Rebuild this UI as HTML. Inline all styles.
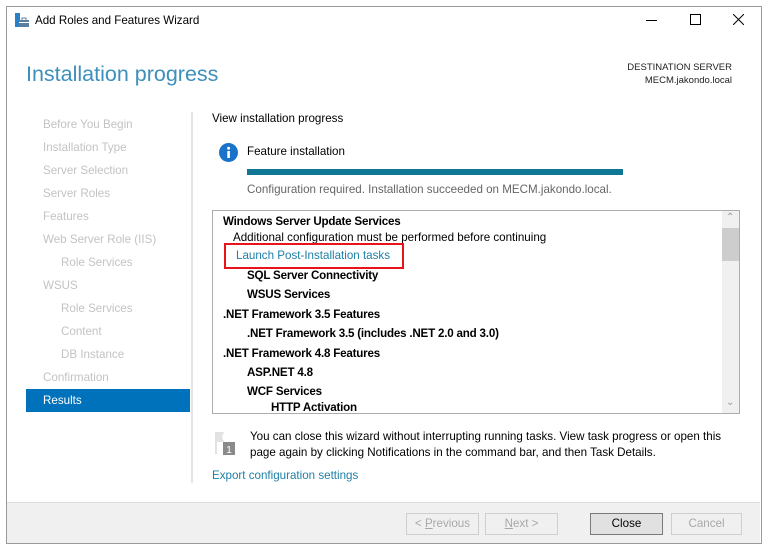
<!DOCTYPE html>
<html><head><meta charset="utf-8"><style>
body{margin:0;width:768px;height:551px;background:#fff;position:relative;overflow:hidden;font-family:"Liberation Sans",sans-serif;font-size:11.6px;color:#000}
.a{position:absolute;white-space:nowrap}
.nav{position:absolute;left:43px;color:#c3c3c3;font-size:11.6px}
.b{font-weight:bold;letter-spacing:-0.2px}
.btn{position:absolute;top:513px;height:20px;border:1px solid #cfcfcf;background:#f0f0f0;color:#a8a8a8;text-align:center;line-height:20px;font-size:11.6px;width:70px}
</style></head><body>
<div class="a" style="left:6px;top:6px;width:754px;height:536px;border:1px solid #9a9a9a;background:#fff"></div>
<svg class="a" style="left:14px;top:13px" width="16" height="16"><rect x="1" y="0" width="5" height="14" fill="#2b7fc7"/><rect x="5" y="7" width="10" height="7" fill="#5b7da0"/><rect x="8" y="5" width="4" height="3" fill="none" stroke="#5b7da0"/><rect x="5" y="9" width="10" height="1" fill="#fff"/></svg>
<div class="a" style="left:35px;top:14px;font-size:11.6px">Add Roles and Features Wizard</div>
<div class="a" style="left:646px;top:20px;width:11px;height:1px;background:#000"></div>
<div class="a" style="left:690px;top:14px;width:9px;height:9px;border:1px solid #000"></div>
<svg class="a" style="left:733px;top:14px" width="11" height="11"><path d="M0 0L11 11M11 0L0 11" stroke="#000" stroke-width="1"/></svg>
<div class="a" style="left:26px;top:62px;font-size:21.5px;color:#3d8fbc">Installation progress</div>
<div class="a" style="right:36px;top:61px;font-size:9.5px;text-align:right;color:#222;line-height:13px">DESTINATION SERVER<br>MECM.jakondo.local</div>
<div class="nav" style="top:118px">Before You Begin</div>
<div class="nav" style="top:141px">Installation Type</div>
<div class="nav" style="top:164px">Server Selection</div>
<div class="nav" style="top:187px">Server Roles</div>
<div class="nav" style="top:210px">Features</div>
<div class="nav" style="top:233px">Web Server Role (IIS)</div>
<div class="nav" style="top:256px;left:61px">Role Services</div>
<div class="nav" style="top:279px">WSUS</div>
<div class="nav" style="top:302px;left:61px">Role Services</div>
<div class="nav" style="top:325px;left:61px">Content</div>
<div class="nav" style="top:348px;left:61px">DB Instance</div>
<div class="nav" style="top:371px">Confirmation</div>
<div class="a" style="left:26px;top:389px;width:164px;height:23px;background:#0072bc"></div>
<div class="nav" style="top:394px;color:#fff">Results</div>
<div class="a" style="left:191px;top:112px;width:2px;height:371px;background:#e4e4e4"></div>
<div class="a" style="left:212px;top:112px">View installation progress</div>
<svg class="a" style="left:219px;top:143px" width="19" height="19"><circle cx="9.5" cy="9.5" r="9.5" fill="#1a73c8"/><rect x="8.3" y="8" width="2.6" height="7" fill="#fff"/><circle cx="9.6" cy="5.2" r="1.5" fill="#fff"/></svg>
<div class="a" style="left:247px;top:145px">Feature installation</div>
<div class="a" style="left:247px;top:169px;width:376px;height:6px;background:#0f7694"></div>
<div class="a" style="left:247px;top:183px;color:#666">Configuration required. Installation succeeded on MECM.jakondo.local.</div>
<div class="a" style="left:212px;top:210px;width:526px;height:202px;border:1px solid #adadad;background:#fff;overflow:hidden">
<div class="a" style="left:509px;top:0;width:17px;height:202px;background:#f0f0f0"></div>
<div class="a" style="left:509px;top:17px;width:17px;height:33px;background:#cdcdcd"></div>
<div class="a" style="left:513px;top:1px;color:#999;font-size:10px">&#8963;</div>
<div class="a" style="left:513px;top:186px;color:#999;font-size:10px">&#8964;</div>
<div class="a b" style="left:10px;top:4px">Windows Server Update Services</div>
<div class="a" style="left:20px;top:20px">Additional configuration must be performed before continuing</div>
<div class="a" style="left:23px;top:38px;color:#1e7fa8">Launch Post-Installation tasks</div>
<div class="a b" style="left:34px;top:58px">SQL Server Connectivity</div>
<div class="a b" style="left:34px;top:77px">WSUS Services</div>
<div class="a b" style="left:10px;top:97px">.NET Framework 3.5 Features</div>
<div class="a b" style="left:34px;top:116px">.NET Framework 3.5 (includes .NET 2.0 and 3.0)</div>
<div class="a b" style="left:10px;top:136px">.NET Framework 4.8 Features</div>
<div class="a b" style="left:34px;top:155px">ASP.NET 4.8</div>
<div class="a b" style="left:34px;top:174px">WCF Services</div>
<div class="a b" style="left:58px;top:190px">HTTP Activation</div>
</div>
<div class="a" style="left:224px;top:243px;width:176px;height:22px;border:2px solid #e8141a"></div>
<svg class="a" style="left:213px;top:430px" width="24" height="26"><path d="M2 2h9l-2 5 2 5h-7v12h-2z" fill="#e2e2e2"/><rect x="10" y="12" width="12" height="13" fill="#8a8a8a"/><text x="16" y="23" font-size="10" fill="#fff" text-anchor="middle" font-family="Liberation Sans">1</text></svg>
<div class="a" style="left:250px;top:429px;line-height:15.5px">You can close this wizard without interrupting running tasks. View task progress or open this<br>page again by clicking Notifications in the command bar, and then Task Details.</div>
<div class="a" style="left:212px;top:469px;color:#1e7fa8">Export configuration settings</div>
<div class="a" style="left:7px;top:502px;width:753px;height:40px;background:#f0f0f0;border-top:1px solid #dcdcdc"></div>
<div class="btn" style="left:406px;width:71px">&lt; <u>P</u>revious</div>
<div class="btn" style="left:485px;width:71px"><u>N</u>ext &gt;</div>
<div class="btn" style="left:590px;width:71px;border-color:#7a7a7a;background:#e1e1e1;color:#000">Close</div>
<div class="btn" style="left:671px;width:69px">Cancel</div>
</body></html>
